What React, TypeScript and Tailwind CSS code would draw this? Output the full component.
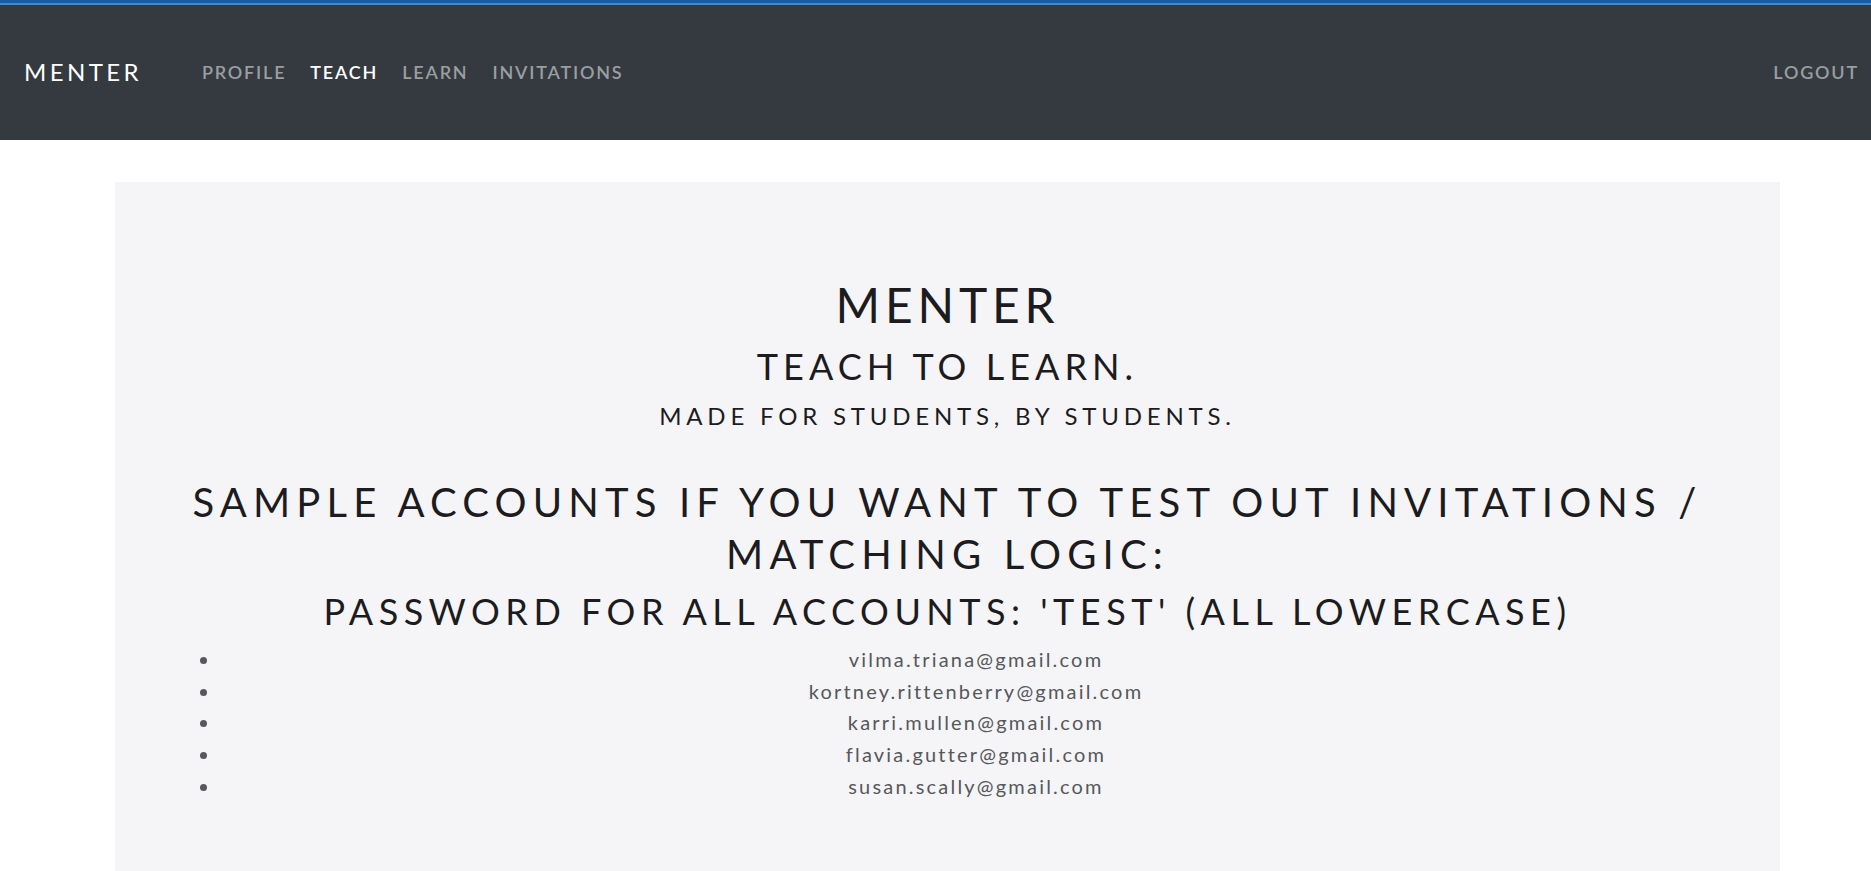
import React from "react";

const emails = [
  "vilma.triana@gmail.com",
  "kortney.rittenberry@gmail.com",
  "karri.mullen@gmail.com",
  "flavia.gutter@gmail.com",
  "susan.scally@gmail.com",
];

export default function App() {
  return (
    <div className="min-h-[871px] bg-white font-['Lato',_'Noto_Sans',_sans-serif]">
      <div className="h-[3px] bg-[#1b5a9c]" />
      <div className="h-[2px] bg-[#4f86bf]" />
      <nav className="flex h-[135px] items-center bg-[#343a40] pb-[2px] pl-[24px] pr-[12px]">
        <span className="text-[24px] leading-none tracking-[3.4px] text-white">MENTER</span>
        <div className="ml-[60px] flex gap-[24px] text-[18px] font-semibold leading-none tracking-[1.8px] text-[#9b9ea1]">
          <a>PROFILE</a>
          <a className="text-white">TEACH</a>
          <a>LEARN</a>
          <a>INVITATIONS</a>
        </div>
        <a className="ml-auto text-[18px] font-semibold leading-none tracking-[1.8px] text-[#9b9ea1]">LOGOUT</a>
      </nav>
      <main className="ml-[115px] mt-[42px] w-[1665px] bg-[#f5f5f7] px-[48px] pb-[120px] pt-[94px] text-center text-[#1c1c1f]">
        <h1 className="text-[48px] leading-[1.2] tracking-[0.1em]">MENTER</h1>
        <h2 className="mt-[11px] text-[36px] leading-[1.2] tracking-[0.14em]">TEACH TO LEARN.</h2>
        <h3 className="mt-[14px] text-[24px] leading-[1.2] tracking-[0.2em]">MADE FOR STUDENTS, BY STUDENTS.</h3>
        <h2 className="mt-[45px] text-[40px] leading-[52px] tracking-[6.15px]">
          SAMPLE ACCOUNTS IF YOU WANT TO TEST OUT INVITATIONS / MATCHING LOGIC:
        </h2>
        <h3 className="mt-[10px] text-[36px] leading-[1.2] tracking-[5.5px]">
          PASSWORD FOR ALL ACCOUNTS: 'TEST' (ALL LOWERCASE)
        </h3>
        <ul className="mt-[11px] list-disc pl-[57px] text-[20px] leading-[31.75px] tracking-[2.2px] text-[#55585c] marker:text-[#55595d]">
          {emails.map((e) => (
            <li key={e}>{e}</li>
          ))}
        </ul>
      </main>
    </div>
  );
}
